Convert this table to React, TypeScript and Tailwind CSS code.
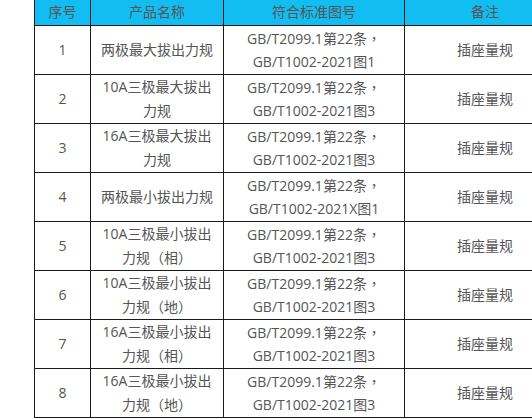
const rows: { no: string; name: string[]; std: string[] }[] = [
  { no: "1", name: ["两极最大拔出力规"], std: ["GB/T2099.1第22条", "GB/T1002-2021图1"] },
  { no: "2", name: ["10A三极最大拔出", "力规"], std: ["GB/T2099.1第22条", "GB/T1002-2021图3"] },
  { no: "3", name: ["16A三极最大拔出", "力规"], std: ["GB/T2099.1第22条", "GB/T1002-2021图3"] },
  { no: "4", name: ["两极最小拔出力规"], std: ["GB/T2099.1第22条", "GB/T1002-2021X图1"] },
  { no: "5", name: ["10A三极最小拔出", "力规（相）"], std: ["GB/T2099.1第22条", "GB/T1002-2021图3"] },
  { no: "6", name: ["10A三极最小拔出", "力规（地）"], std: ["GB/T2099.1第22条", "GB/T1002-2021图3"] },
  { no: "7", name: ["16A三极最小拔出", "力规（相）"], std: ["GB/T2099.1第22条", "GB/T1002-2021图3"] },
  { no: "8", name: ["16A三极最小拔出", "力规（地）"], std: ["GB/T2099.1第22条", "GB/T1002-2021图3"] },
];

const cell = "border border-[#1a1a1a] text-center align-middle px-2";

export default function App() {
  return (
    <div
      className="h-[419px] w-[532px] overflow-hidden bg-white pl-[34px] text-[14px] leading-[24px] text-[#555]"
      style={{ fontFamily: '"Open Sans", "Noto Sans CJK SC", sans-serif' }}
    >
      <table className="w-[531px] table-fixed border-collapse">
        <colgroup>
          <col className="w-[56px]" />
          <col className="w-[133px]" />
          <col className="w-[181px]" />
          <col className="w-[161px]" />
        </colgroup>
        <thead>
          <tr className="h-[25px] bg-[#12bdf2]">
            <th className={`${cell} border-t-0 font-normal`}>序号</th>
            <th className={`${cell} border-t-0 font-normal`}>产品名称</th>
            <th className={`${cell} border-t-0 font-normal`}>符合标准图号</th>
            <th className={`${cell} border-t-0 font-normal`}>备注</th>
          </tr>
        </thead>
        <tbody>
          {rows.map((r) => (
            <tr key={r.no} className="h-[49px]">
              <td className={cell}>{r.no}</td>
              <td className={`${cell} whitespace-nowrap`}>
                {r.name.map((l) => (
                  <div key={l} className="h-[24px]">
                    {l}
                  </div>
                ))}
              </td>
              <td className={`${cell} whitespace-nowrap`}>
                <div className="h-[24px]">
                  {r.std[0]}
                  <span style={{ fontFamily: '"Noto Sans CJK TC", sans-serif' }}>，</span>
                </div>
                <div className="h-[24px]">{r.std[1]}</div>
              </td>
              <td className={cell}>插座量规</td>
            </tr>
          ))}
        </tbody>
      </table>
    </div>
  );
}
